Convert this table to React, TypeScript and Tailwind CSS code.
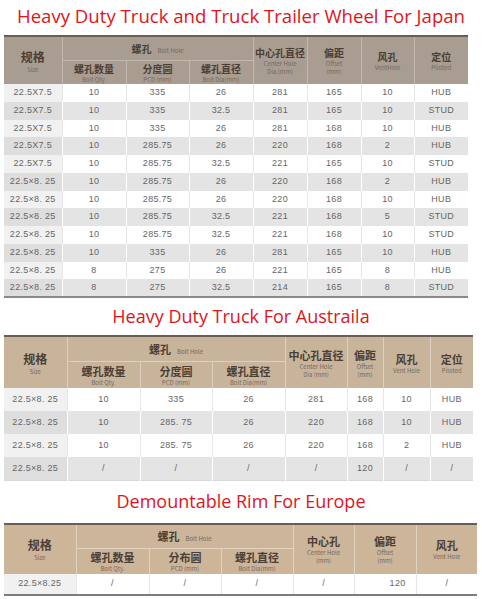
import React from "react";

type Head = { zh: string; en: string[] };

type TableProps = {
  widths: number[];
  left: Head;
  sub: Head[];
  rest: Head[];
  rows: string[][];
  topH: number;
  subH: number;
  rowH: number;
  headBg: string;
  lineColor: string;
  bottomBorder: string;
  zhSize: string;
  alignRight?: number[];
};

const zhFont = { fontFamily: '"Noto Sans CJK SC", "Noto Sans", sans-serif' };
const dataFont = { fontFamily: '"Liberation Sans", Arial, sans-serif' };

function HeadCell({ h, size }: { h: Head; size: string }) {
  return (
    <div className="flex flex-col items-center whitespace-nowrap" style={zhFont}>
      <span className={`${size} font-bold text-[#4b3e35]`}>{h.zh}</span>
      {h.en.map((e) => (
        <span key={e} className="text-[6px] text-[#75685d] leading-[7px] mt-[1px]">
          {e}
        </span>
      ))}
    </div>
  );
}

function SpecTable(p: TableProps) {
  const total = p.widths.reduce((a, b) => a + b, 0);
  return (
    <table className="border-collapse table-fixed ml-[4px]" style={{ width: total }}>
      <colgroup>
        {p.widths.map((w, i) => (
          <col key={i} style={{ width: w }} />
        ))}
      </colgroup>
      <thead>
        <tr className={`${p.headBg} border-t-[2px] border-[#6a5d53]`} style={{ height: p.topH }}>
          <th rowSpan={2} className={`border-r ${p.lineColor} font-normal p-0`}>
            <HeadCell h={p.left} size="text-[12px] leading-[16px]" />
          </th>
          <th colSpan={3} className={`border-r border-b ${p.lineColor} font-normal p-0`}>
            <div className="flex items-baseline justify-center gap-[6px]" style={zhFont}>
              <span className={`${p.zhSize} font-bold text-[#4b3e35]`}>螺孔</span>
              <span className="text-[6px] text-[#75685d]">Bolt Hole</span>
            </div>
          </th>
          {p.rest.map((h, i) => (
            <th
              key={h.zh}
              rowSpan={2}
              className={`${i < p.rest.length - 1 ? `border-r ${p.lineColor}` : ""} font-normal p-0`}
            >
              <HeadCell h={h} size={p.zhSize} />
            </th>
          ))}
        </tr>
        <tr className={p.headBg} style={{ height: p.subH }}>
          {p.sub.map((h) => (
            <th key={h.zh} className={`border-r ${p.lineColor} font-normal p-0`}>
              <HeadCell h={h} size={p.zhSize} />
            </th>
          ))}
        </tr>
      </thead>
      <tbody className={p.bottomBorder}>
        {p.rows.map((r, ri) => {
          const grey = ri % 2 === 1;
          return (
            <tr key={ri} className={grey ? "bg-[#e4e4e4]" : "bg-white"} style={{ height: p.rowH }}>
              {r.map((c, ci) => (
                <td
                  key={ci}
                  className={`${ci < r.length - 1 ? "border-r" : ""} ${
                    grey ? "border-white" : "border-[#e6e6e6]"
                  } ${ci === 0 ? (grey ? "bg-[#dedede]" : "bg-[#f1f1f1]") : ""} ${
                    p.alignRight?.includes(ci) ? "text-right pr-[10px]" : "text-center"
                  } text-[9px] text-[#666666] tracking-[0.3px] p-0 whitespace-nowrap`}
                  style={dataFont}
                >
                  {c}
                </td>
              ))}
            </tr>
          );
        })}
      </tbody>
    </table>
  );
}

function Title({ children, h }: { children: React.ReactNode; h: string }) {
  return (
    <div
      className={`${h} flex items-center justify-center text-[#e0141c] whitespace-nowrap`}
      style={{ fontFamily: '"Open Sans", "Noto Sans", sans-serif' }}
    >
      {children}
    </div>
  );
}

const subA: Head[] = [
  { zh: "螺孔数量", en: ["Bolt Qty."] },
  { zh: "分度圆", en: ["PCD (mm)"] },
  { zh: "螺孔直径", en: ["Bolt Dia(mm)"] },
];

const japanRows = [
  ["22.5X7.5", "10", "335", "26", "281", "165", "10", "HUB"],
  ["22.5X7.5", "10", "335", "32.5", "281", "165", "10", "STUD"],
  ["22.5X7.5", "10", "335", "26", "281", "168", "10", "HUB"],
  ["22.5X7.5", "10", "285.75", "26", "220", "168", "2", "HUB"],
  ["22.5X7.5", "10", "285.75", "32.5", "221", "165", "10", "STUD"],
  ["22.5×8. 25", "10", "285.75", "26", "220", "168", "2", "HUB"],
  ["22.5×8. 25", "10", "285.75", "26", "220", "168", "10", "HUB"],
  ["22.5×8. 25", "10", "285.75", "32.5", "221", "168", "5", "STUD"],
  ["22.5×8. 25", "10", "285.75", "32.5", "221", "168", "10", "STUD"],
  ["22.5×8. 25", "10", "335", "26", "281", "165", "10", "HUB"],
  ["22.5×8. 25", "8", "275", "26", "221", "165", "8", "HUB"],
  ["22.5×8. 25", "8", "275", "32.5", "214", "165", "8", "STUD"],
];

const ausRows = [
  ["22.5×8. 25", "10", "335", "26", "281", "168", "10", "HUB"],
  ["22.5×8. 25", "10", "285. 75", "26", "220", "168", "10", "HUB"],
  ["22.5×8. 25", "10", "285. 75", "26", "220", "168", "2", "HUB"],
  ["22.5×8. 25", "/", "/", "/", "/", "120", "/", "/"],
];

const euRows = [["22.5×8.25", "/", "/", "/", "/", "120", "/"]];

export default function App() {
  return (
    <div className="w-[482px] h-[599px] bg-white overflow-hidden">
      <Title h="h-[31px] text-[18.6px]">Heavy Duty Truck and Truck Trailer Wheel For Japan</Title>
      <div className="h-[4px]" />
      <SpecTable
        widths={[58, 64, 63, 64, 54, 54, 53, 54]}
        left={{ zh: "规格", en: ["Size"] }}
        sub={subA}
        rest={[
          { zh: "中心孔直径", en: ["Center Hole", "Dia.(mm)"] },
          { zh: "偏距", en: ["Offset", "(mm)"] },
          { zh: "风孔", en: ["VentHole"] },
          { zh: "定位", en: ["Piloted"] },
        ]}
        rows={japanRows}
        topH={24}
        subH={24}
        rowH={17.75}
        headBg="bg-[#a99d91]"
        lineColor="border-[#c2b8ad]"
        bottomBorder="border-b-[2px] border-[#8a8a8a]"
        zhSize="text-[10px] leading-[13px]"
      />
      <Title h="h-[37px] text-[18px]">Heavy Duty Truck For Austraila</Title>
      <SpecTable
        widths={[63, 73, 72, 73, 62, 36, 47, 43]}
        left={{ zh: "规格", en: ["Size"] }}
        sub={subA}
        rest={[
          { zh: "中心孔直径", en: ["Center Hole", "Dia (mm)"] },
          { zh: "偏距", en: ["Offset", "(mm)"] },
          { zh: "风孔", en: ["Vent Hole"] },
          { zh: "定位", en: ["Piloted"] },
        ]}
        rows={ausRows}
        topH={25}
        subH={27}
        rowH={23}
        headBg="bg-[#c8b49b]"
        lineColor="border-[#ddd0c0]"
        bottomBorder="border-b border-[#d8d8d8]"
        zhSize="text-[11px] leading-[14px]"
      />
      <Title h="h-[42px] text-[18px]">Demountable Rim For Europe</Title>
      <SpecTable
        widths={[72, 73, 72, 72, 61, 62, 61]}
        left={{ zh: "规格", en: ["Size"] }}
        sub={[
          { zh: "螺孔数量", en: ["Bolt Qty."] },
          { zh: "分布圆", en: ["PCD (mm)"] },
          { zh: "螺孔直径", en: ["Bolt Dia(mm)"] },
        ]}
        rest={[
          { zh: "中心孔", en: ["Center Hole", "(mm)"] },
          { zh: "偏距", en: ["Offset", "(mm)"] },
          { zh: "风孔", en: ["Vent Hole"] },
        ]}
        rows={euRows}
        topH={25}
        subH={25}
        rowH={21}
        headBg="bg-[#ccb599]"
        lineColor="border-[#e0d3c3]"
        bottomBorder="border-b-[2px] border-[#7d7d7d]"
        zhSize="text-[11px] leading-[14px]"
        alignRight={[5]}
      />
    </div>
  );
}
